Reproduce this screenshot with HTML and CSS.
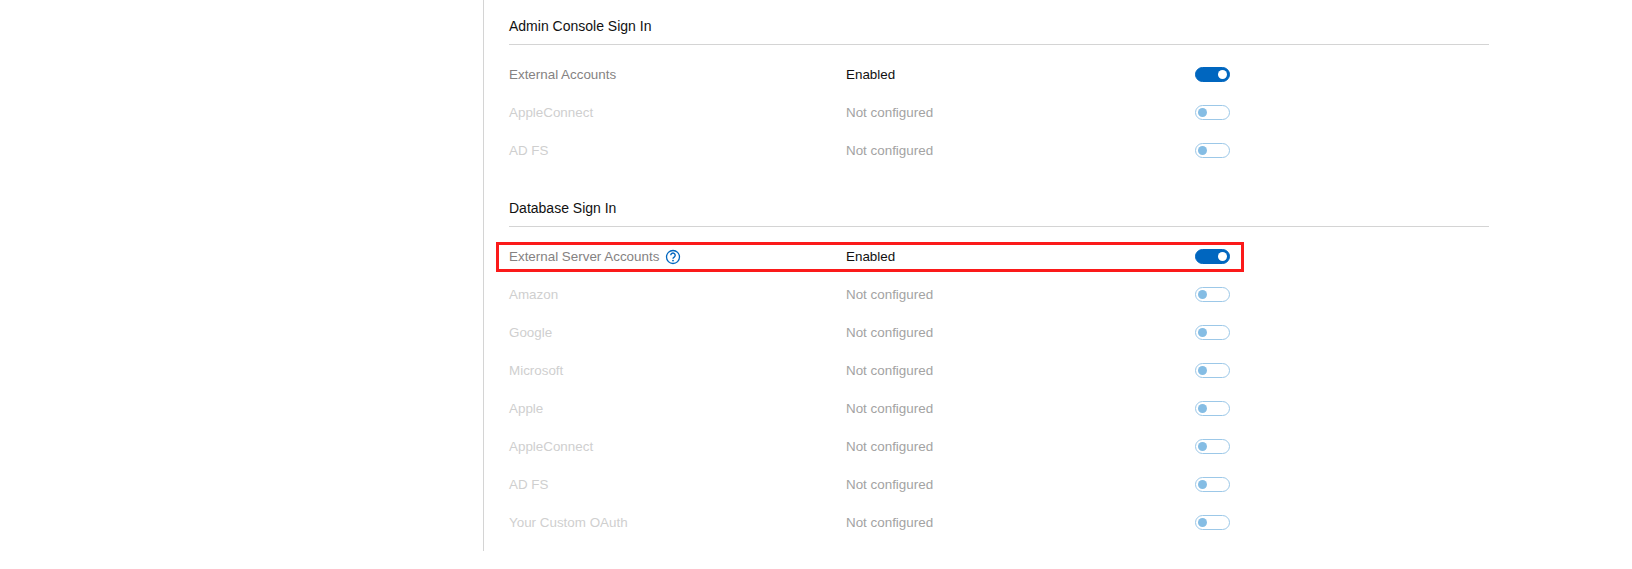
FILE: index.html
```html
<!DOCTYPE html>
<html lang="en">
<head>
    <meta charset="UTF-8">
    <meta name="viewport" content="width=device-width, initial-scale=1.0">
    <title>Authentication Settings</title>
    <link rel="stylesheet" href="styles.css">
</head>
<body>

<div class="page">
    <div class="content">
        <h2 class="section-title">Admin Console Sign In</h2>
        <div class="rows">
            <div class="row">
                <span class="name">External Accounts</span>
                <span class="status">Enabled</span>
                <span class="toggle on"></span>
            </div>
            <div class="row off">
                <span class="name">AppleConnect</span>
                <span class="status">Not configured</span>
                <span class="toggle"></span>
            </div>
            <div class="row off">
                <span class="name">AD FS</span>
                <span class="status">Not configured</span>
                <span class="toggle"></span>
            </div>
        </div>

        <h2 class="section-title">Database Sign In</h2>
        <div class="rows">
            <div class="row">
                <span class="name">External Server Accounts
                    <svg class="help" width="16" height="16" viewBox="0 0 16 16">
                        <circle cx="8" cy="8" r="6.5" fill="none" stroke="#0066bf" stroke-width="1.3"/>
                        <path d="M5.8 6.3a2.2 2.2 0 1 1 3.4 1.8c-.8.5-1.2.9-1.2 1.7" fill="none" stroke="#0066bf" stroke-width="1.4"/>
                        <circle cx="8" cy="11.6" r=".9" fill="#0066bf"/>
                    </svg>
                </span>
                <span class="status">Enabled</span>
                <span class="toggle on"></span>
                <div class="highlight"></div>
            </div>
            <div class="row off">
                <span class="name">Amazon</span>
                <span class="status">Not configured</span>
                <span class="toggle"></span>
            </div>
            <div class="row off">
                <span class="name">Google</span>
                <span class="status">Not configured</span>
                <span class="toggle"></span>
            </div>
            <div class="row off">
                <span class="name">Microsoft</span>
                <span class="status">Not configured</span>
                <span class="toggle"></span>
            </div>
            <div class="row off">
                <span class="name">Apple</span>
                <span class="status">Not configured</span>
                <span class="toggle"></span>
            </div>
            <div class="row off">
                <span class="name">AppleConnect</span>
                <span class="status">Not configured</span>
                <span class="toggle"></span>
            </div>
            <div class="row off">
                <span class="name">AD FS</span>
                <span class="status">Not configured</span>
                <span class="toggle"></span>
            </div>
            <div class="row off">
                <span class="name">Your Custom OAuth</span>
                <span class="status">Not configured</span>
                <span class="toggle"></span>
            </div>
        </div>
    </div>
</div>

</body>
</html>
```
FILE: styles.css
```css
body {
    font-family: "Liberation Sans", Arial, sans-serif;
    font-size: 13.4px;
    background-color: #fff;
    margin: 0;
    padding: 0;
}
.page {
    margin-left: 483px;
    width: 1005px;
    height: 551px;
    border-left: 1px solid #d4d4d4;
    overflow: hidden;
}
.content {
    padding-left: 25px;
}
.section-title {
    margin: 0;
    height: 45px;
    box-sizing: border-box;
    padding-top: 18px;
    line-height: 16px;
    font-size: 14px;
    font-weight: normal;
    color: #111;
    border-bottom: 1px solid #d4d4d4;
}
.rows {
    padding-top: 10px;
    padding-bottom: 13px;
}
.row {
    position: relative;
    display: grid;
    grid-template-columns: 337px 349px 35px;
    align-items: center;
    height: 38px;
}
.name {
    display: flex;
    align-items: center;
    gap: 6px;
    color: #858282;
}
.status {
    color: #111;
}
.off .name {
    color: #cfcfcf;
}
.off .status {
    color: #a3a3a3;
}
.help {
    display: block;
    margin-top: 1px;
}
.toggle {
    display: block;
    position: relative;
    box-sizing: border-box;
    width: 35px;
    height: 15px;
    border: 1px solid #9cc8e8;
    border-radius: 8px;
    background-color: #fff;
}
.toggle::after {
    content: "";
    position: absolute;
    left: 2px;
    top: 2px;
    width: 9px;
    height: 9px;
    border-radius: 50%;
    background-color: #85bde4;
}
.toggle.on {
    border-color: #0066bf;
    background-color: #0066bf;
}
.toggle.on::after {
    left: auto;
    right: 2px;
    background-color: #fff;
}
.highlight {
    position: absolute;
    left: -13px;
    top: 5px;
    width: 748px;
    height: 30px;
    box-sizing: border-box;
    border: 3px solid #fb1a1a;
}
```
